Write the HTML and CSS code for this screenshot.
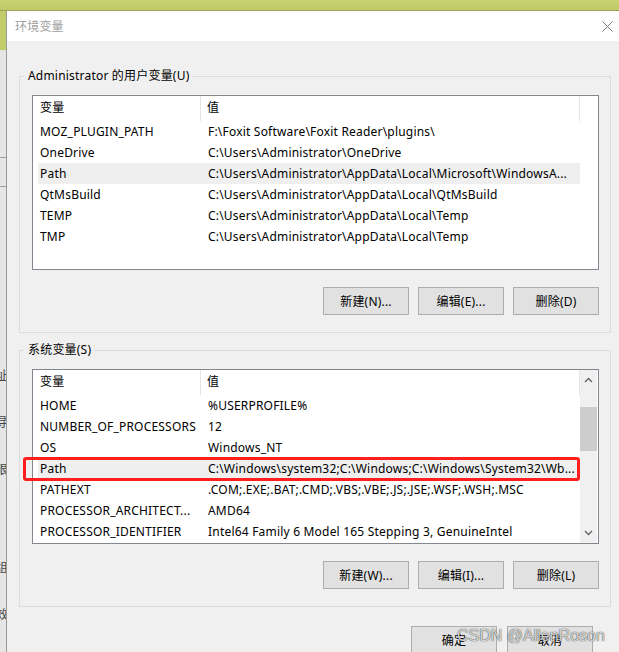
FILE: index.html
```html
<!DOCTYPE html>
<html lang="zh-CN">
<head>
  <meta charset="UTF-8">
  <title>环境变量</title>
  <link rel="stylesheet" href="styles.css">
</head>
<body>
<div class="top-strip"></div>
<div class="desk">
  <!-- pedaço da janela que está por trás -->
  <div class="behind">
    <div class="behind-green"></div>
    <div class="behind-box"></div>
    <div class="behind-text">
      <div class="frag">址</div>
      <div class="frag">寻</div>
      <div class="frag">眼</div>
      <div class="frag"></div>
      <div class="frag low">组</div>
      <div class="frag low">效</div>
    </div>
  </div>

  <div class="dialog">
    <div class="title-bar">
      <span class="title">环境变量</span>
      <svg class="close" width="11" height="11" viewBox="0 0 11 11">
        <path d="M0.5 0.5 L10.5 10.5 M10.5 0.5 L0.5 10.5" stroke="#7a7a7a" stroke-width="1" fill="none"/>
      </svg>
    </div>

    <div class="dialog-body">
      <fieldset class="group">
        <legend>Administrator 的用户变量(U)</legend>
        <div class="list">
          <div class="table">
            <div class="head">
              <div class="hcell name">变量</div>
              <div class="hcell value">值</div>
            </div>
            <div class="row"><div class="cell name">MOZ_PLUGIN_PATH</div><div class="cell value">F:\Foxit Software\Foxit Reader\plugins\</div></div>
            <div class="row"><div class="cell name">OneDrive</div><div class="cell value">C:\Users\Administrator\OneDrive</div></div>
            <div class="row selected"><div class="cell name">Path</div><div class="cell value">C:\Users\Administrator\AppData\Local\Microsoft\WindowsA...</div></div>
            <div class="row"><div class="cell name">QtMsBuild</div><div class="cell value">C:\Users\Administrator\AppData\Local\QtMsBuild</div></div>
            <div class="row"><div class="cell name">TEMP</div><div class="cell value">C:\Users\Administrator\AppData\Local\Temp</div></div>
            <div class="row"><div class="cell name">TMP</div><div class="cell value">C:\Users\Administrator\AppData\Local\Temp</div></div>
          </div>
          <div class="side"></div>
        </div>
        <div class="buttons">
          <button>新建(N)...</button>
          <button>编辑(E)...</button>
          <button>删除(D)</button>
        </div>
      </fieldset>

      <fieldset class="group">
        <legend>系统变量(S)</legend>
        <div class="list">
          <div class="table">
            <div class="head">
              <div class="hcell name">变量</div>
              <div class="hcell value">值</div>
            </div>
            <div class="row"><div class="cell name">HOME</div><div class="cell value">%USERPROFILE%</div></div>
            <div class="row"><div class="cell name">NUMBER_OF_PROCESSORS</div><div class="cell value">12</div></div>
            <div class="row"><div class="cell name">OS</div><div class="cell value">Windows_NT</div></div>
            <div class="row selected marked"><div class="cell name">Path</div><div class="cell value">C:\Windows\system32;C:\Windows;C:\Windows\System32\Wb...</div></div>
            <div class="row"><div class="cell name">PATHEXT</div><div class="cell value">.COM;.EXE;.BAT;.CMD;.VBS;.VBE;.JS;.JSE;.WSF;.WSH;.MSC</div></div>
            <div class="row"><div class="cell name">PROCESSOR_ARCHITECT...</div><div class="cell value">AMD64</div></div>
            <div class="row"><div class="cell name">PROCESSOR_IDENTIFIER</div><div class="cell value">Intel64 Family 6 Model 165 Stepping 3, GenuineIntel</div></div>
          </div>
          <div class="side">
            <div class="scrollbar">
              <div class="arrow">
                <svg width="9" height="6" viewBox="0 0 9 6"><path d="M1 5 L4.5 1.5 L8 5" stroke="#606060" stroke-width="1.3" fill="none"/></svg>
              </div>
              <div class="track"><div class="thumb"></div></div>
              <div class="arrow">
                <svg width="9" height="6" viewBox="0 0 9 6"><path d="M1 1 L4.5 4.5 L8 1" stroke="#606060" stroke-width="1.3" fill="none"/></svg>
              </div>
            </div>
          </div>
        </div>
        <div class="buttons">
          <button>新建(W)...</button>
          <button>编辑(I)...</button>
          <button>删除(L)</button>
        </div>
      </fieldset>

      <div class="footer">
        <button>确定</button>
        <button>取消</button>
      </div>
    </div>
  </div>
</div>

<div class="watermark">CSDN @AllenRoson</div>
</body>
</html>
```

FILE: styles.css
```css
html, body {
  margin: 0;
  height: 100%;
  overflow: hidden;
}
body {
  font-family: "Noto Sans", "Noto Sans CJK SC", sans-serif;
  font-size: 12px;
  letter-spacing: 0.2px;
  color: #000;
  background: #e4e4e4;
  position: relative;
}
.top-strip {
  height: 10px;
  background: linear-gradient(#c8d270, #bfca66);
  border-bottom: 1px solid #9ea45e;
}
.desk {
  display: flex;
  height: 641px;
}

/* janela de trás, só aparece uma tira */
.behind {
  width: 6px;
  flex-shrink: 0;
  background: #e6e6e6;
  overflow: hidden;
}
.behind-green {
  height: 39px;
  background: #c2cd69;
}
.behind-box {
  margin-top: 107px;
  height: 28px;
  border-top: 1px solid #a0a0a0;
  border-bottom: 1px solid #a0a0a0;
}
.behind-text {
  margin-top: 165px;
}
.frag {
  height: 47px;
  line-height: 47px;
  direction: rtl;
  white-space: nowrap;
  color: #444;
  margin-right: -2px;
}
.frag.low {
  position: relative;
  top: 4px;
}

.dialog {
  width: 616px;
  flex-shrink: 0;
  border-left: 1px solid #9a9a9a;
  background: #f0f0f0;
}
.title-bar {
  height: 30px;
  background: #fff;
  display: flex;
  align-items: center;
  justify-content: space-between;
  padding: 0 10px 0 8px;
}
.title {
  color: #a0a0a0;
}
.close {
  margin-top: 1px;
}

.dialog-body {
  padding-top: 27px;
}
.group {
  margin: 0 12px;
  padding: 11px 11px 17px 12px;
  border: 1px solid #dcdcdc;
  min-width: 0;
}
.group + .group {
  margin-top: 9px;
}
.group legend {
  margin-left: -8px;
  padding: 0 3px 0 4px;
  line-height: 16px;
}

.list {
  height: 175px;
  box-sizing: border-box;
  border: 1px solid #828790;
  background: #fff;
  display: flex;
}
.table {
  width: 547px;
  flex-shrink: 0;
}
.side {
  flex: 1;
}
.head {
  display: flex;
  height: 25px;
  line-height: 24px;
}
.hcell {
  border-right: 1px solid #e5e5e5;
  box-sizing: border-box;
}
.hcell.name {
  width: 168px;
  padding-left: 7px;
}
.hcell.value {
  flex: 1;
  padding-left: 6px;
}
.row {
  display: flex;
  height: 21px;
  line-height: 21px;
  margin-left: 5px;
  white-space: nowrap;
}
.row.selected {
  background: #efefef;
}
.cell {
  overflow: hidden;
  box-sizing: border-box;
}
.cell.name {
  width: 163px;
  padding-left: 2px;
}
.cell.value {
  flex: 1;
  padding-left: 7px;
}

/* a marcação vermelha em volta do Path */
.row.marked {
  position: relative;
}
.row.marked::after {
  content: '';
  position: absolute;
  top: -1px;
  bottom: -2px;
  left: -15px;
  right: 0;
  border: 3px solid #ff1f1f;
  border-radius: 3px;
}

.scrollbar {
  width: 17px;
  height: 100%;
  display: flex;
  flex-direction: column;
  background: #f0f0f0;
}
.arrow {
  height: 20px;
  display: flex;
  align-items: center;
  justify-content: center;
}
.track {
  flex: 1;
  padding-top: 17px;
}
.thumb {
  height: 44px;
  background: #cdcdcd;
}

.buttons {
  display: flex;
  justify-content: flex-end;
  gap: 9px;
  margin-top: 17px;
}
button {
  font-family: inherit;
  font-size: 12px;
  letter-spacing: 0.2px;
  color: #000;
  width: 86px;
  height: 28px;
  padding: 0;
  background: #e1e1e1;
  border: 1px solid #adadad;
}
.footer {
  display: flex;
  justify-content: flex-end;
  gap: 10px;
  margin-top: 19px;
  padding-right: 30px;
}

.watermark {
  position: absolute;
  left: 457px;
  top: 627px;
  font-family: "Liberation Sans", sans-serif;
  font-size: 16px;
  letter-spacing: 0;
  color: rgba(255, 255, 255, 0.8);
  text-shadow: 0 0 1px rgba(0, 0, 0, 0.7), 0 0 1px rgba(0, 0, 0, 0.5);
}
```
